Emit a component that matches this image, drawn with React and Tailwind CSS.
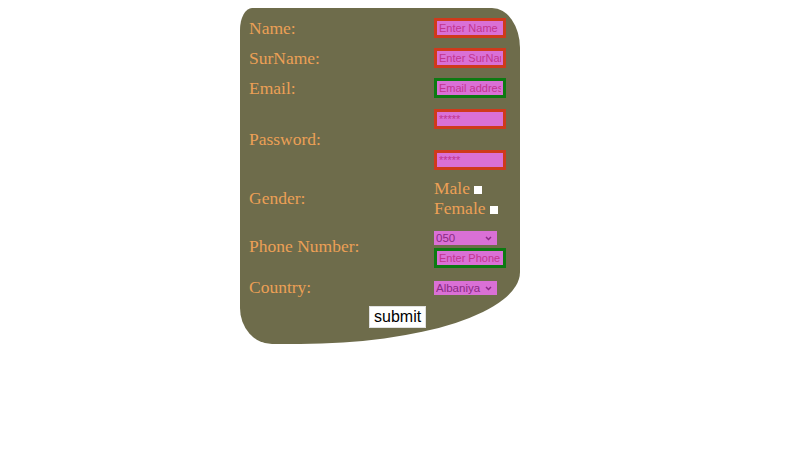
import React from 'react';

// Formulario de registro
function TextField({ placeholder, type = 'text', ok = false }) {
  return (
    <input
      type={type}
      placeholder={placeholder}
      className={
        ok
          ? 'block w-[72px] h-[20px] border-[3px] border-[#0d7a12] bg-[#da70d6] px-[2px] text-[11px] text-[#b0278f] placeholder:text-[#c2348f] outline-none'
          : 'block w-[72px] h-[20px] border-[3px] border-[#cf3a1c] bg-[#da70d6] px-[2px] text-[11px] text-[#b0278f] placeholder:text-[#c2348f] outline-none'
      }
      style={{ fontFamily: '"Liberation Sans", Arial, sans-serif' }}
    />
  );
}

function Select({ options }) {
  return (
    <div className="relative w-[63px] h-[14px]">
      <select
        className="block appearance-none w-[63px] h-[14px] bg-[#da70d6] pl-[2px] text-[11.5px] leading-[14px] text-[#8a2a84] border-0 outline-none"
        style={{ fontFamily: '"Liberation Sans", Arial, sans-serif' }}
      >
        {options.map(o => (
          <option key={o}>{o}</option>
        ))}
      </select>
      {/* flechita */}
      <svg className="absolute right-[5px] top-[5px] pointer-events-none" width="7" height="5" viewBox="0 0 7 5">
        <path d="M1 1 L3.5 3.5 L6 1" fill="none" stroke="#8a2a84" strokeWidth="1.5" />
      </svg>
    </div>
  );
}

function Row({ label, h, children }) {
  return (
    <div className={`flex items-center ${h}`}>
      <div className="w-[185px] text-[17.5px]">{label}</div>
      <div className="flex flex-col">{children}</div>
    </div>
  );
}

export default function App() {
  return (
    <div className="w-[800px] h-[450px] bg-white">
      <div
        className="ml-[240px] mt-[8px] w-[280px] h-[336px] bg-[#6e6c4b] text-[#eca056] pl-[9px] pt-[5px] rounded-[12px_28px_220px_32px/22px_40px_72px_36px]"
        style={{ fontFamily: '"Liberation Serif", "Times New Roman", serif' }}
      >
        <Row label="Name:" h="h-[30px]">
          <TextField placeholder="Enter Name" />
        </Row>
        <Row label="SurName:" h="h-[30px]">
          <TextField placeholder="Enter SurName" />
        </Row>
        <Row label="Email:" h="h-[30px]">
          <TextField placeholder="Email address" ok />
        </Row>
        <Row label="Password:" h="h-[73px]">
          <div className="flex flex-col gap-[21px]">
            <TextField placeholder="*****" type="text" />
            <TextField placeholder="*****" type="text" />
          </div>
        </Row>
        <Row label="Gender:" h="h-[44px]">
          <div className="flex flex-col text-[17.5px] leading-[20px]">
            <label className="flex items-center">
              Male
              <input type="checkbox" className="ml-[4px] mt-[3px] w-[8px] h-[8px] appearance-none bg-white" />
            </label>
            <label className="flex items-center">
              Female
              <input type="checkbox" className="ml-[4px] mt-[3px] w-[8px] h-[8px] appearance-none bg-white" />
            </label>
          </div>
        </Row>
        <Row label="Phone Number:" h="h-[52px]">
          <div className="flex flex-col gap-[3px] pt-[6px]">
            <Select options={['050', '051', '055', '070', '077']} />
            <TextField placeholder="Enter Phone" ok />
          </div>
        </Row>
        <Row label="Country:" h="h-[30px]">
          <div className="pt-[2px]">
            <Select options={['Albaniya', 'Azerbaycan', 'Turkiye']} />
          </div>
        </Row>
        <div className="flex items-center h-[30px] pl-[120px]">
          <button
            className="h-[22px] px-[4px] bg-white text-black text-[16px] leading-[20px] border border-[#e0e0e0]"
            style={{ fontFamily: '"Liberation Sans", Arial, sans-serif' }}
          >
            submit
          </button>
        </div>
      </div>
    </div>
  );
}
